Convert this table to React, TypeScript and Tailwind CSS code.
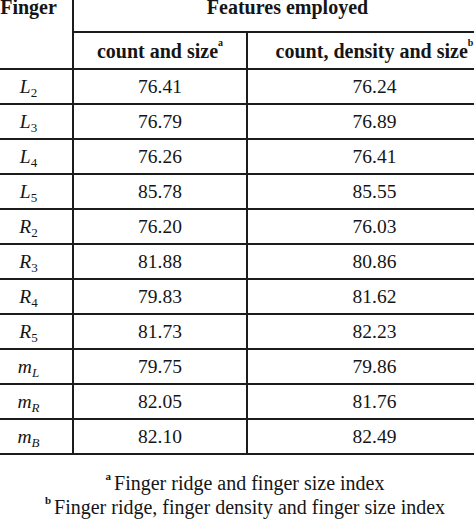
import React from "react";

type Row = { base: string; sub: string; subItalic?: boolean; a: string; b: string };

const rows: Row[] = [
  { base: "L", sub: "2", a: "76.41", b: "76.24" },
  { base: "L", sub: "3", a: "76.79", b: "76.89" },
  { base: "L", sub: "4", a: "76.26", b: "76.41" },
  { base: "L", sub: "5", a: "85.78", b: "85.55" },
  { base: "R", sub: "2", a: "76.20", b: "76.03" },
  { base: "R", sub: "3", a: "81.88", b: "80.86" },
  { base: "R", sub: "4", a: "79.83", b: "81.62" },
  { base: "R", sub: "5", a: "81.73", b: "82.23" },
  { base: "m", sub: "L", subItalic: true, a: "79.75", b: "79.86" },
  { base: "m", sub: "R", subItalic: true, a: "82.05", b: "81.76" },
  { base: "m", sub: "B", subItalic: true, a: "82.10", b: "82.49" },
];

const cell = "border-2 border-[#1c1c1c] p-0 text-center align-middle";

export default function App() {
  return (
    <div className="w-[474px] h-[524px] overflow-hidden bg-white text-[#151515] font-['Liberation_Serif','Times_New_Roman',serif]">
      <table className="border-collapse -ml-[17px] -mt-[5px] w-[518px] table-fixed">
        <colgroup>
          <col className="w-[89px]" />
          <col className="w-[174px]" />
          <col className="w-[255px]" />
        </colgroup>
        <thead>
          <tr className="h-[37px]">
            <th rowSpan={2} className="border-2 border-[#1c1c1c] border-t-0 p-0 pt-[1px] align-top text-center text-[20px] font-bold leading-[22px]">
              Finger
            </th>
            <th colSpan={2} className="border-2 border-[#1c1c1c] border-t-0 p-0 pt-[1px] align-top text-center text-[20px] font-bold leading-[22px]">
              Features employed
            </th>
          </tr>
          <tr className="h-[37px]">
            <th className={`${cell} text-[20px] font-bold`}>
              count and size<sup className="top-0 text-[10px] align-[12px]">a</sup>
            </th>
            <th className={`${cell} text-[20px] font-bold`}>
              count, density and size<sup className="top-0 text-[10px] align-[12px]">b</sup>
            </th>
          </tr>
        </thead>
        <tbody>
          {rows.map((r, i) => (
            <tr key={i} className="h-[35px]">
              <td className={`${cell} text-[19.5px]`}>
                <span className="italic">{r.base}</span>
                <sub className={`bottom-0 text-[13px] align-[-4px] ${r.subItalic ? "italic" : ""}`}>{r.sub}</sub>
              </td>
              <td className={`${cell} text-[19.5px]`}>{r.a}</td>
              <td className={`${cell} text-[19.5px]`}>{r.b}</td>
            </tr>
          ))}
        </tbody>
      </table>
      <div className="mt-[16px] flex flex-col items-center text-[20px] leading-[24px] pl-[16px]">
        <div>
          <sup className="top-0 font-bold text-[11px] align-[10px] mr-[3px]">a</sup>Finger ridge and finger size index
        </div>
        <div>
          <sup className="top-0 font-bold text-[11px] align-[10px] mr-[3px]">b</sup>Finger ridge, finger density and finger size index
        </div>
      </div>
    </div>
  );
}
